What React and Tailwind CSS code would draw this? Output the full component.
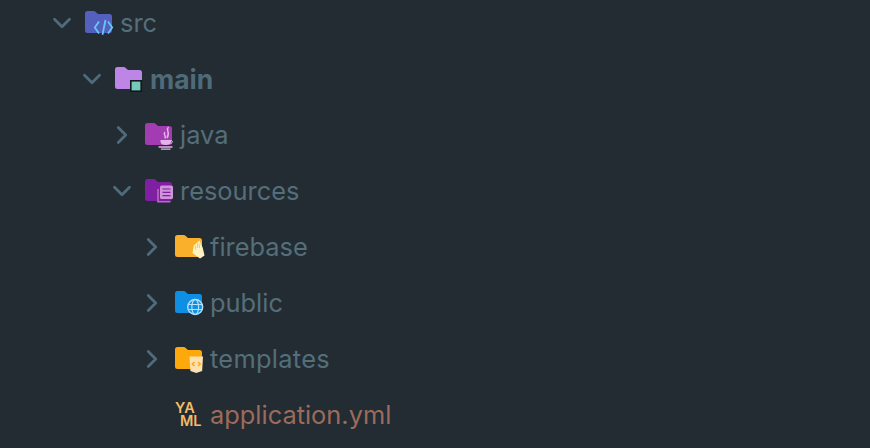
import { ChevronDown, ChevronRight } from 'lucide-react';

const Folder = ({ color }) => (
  <path d="M0 2.500A2.500 2.500 0 0 1 2.500 0h6.200c.8 0 1.500.3 2 .9L13 3h11.500A2.500 2.500 0 0 1 27 5.500V19.500A2.500 2.500 0 0 1 24.500 22H2.500A2.500 2.500 0 0 1 0 19.500Z" fill={color} />
);

const SrcIcon = () => (
  <svg width="30" height="28" viewBox="0 0 30 28" fill="none">
    <Folder color="#5460BE" />
    <path d="M14 10.500 9.800 16.500 14 22.500M23 10.500 27.200 16.500 23 22.500M20.500 9 17.500 23.800" stroke="#64C8F4" strokeWidth="1.800" />
  </svg>
);

const MainIcon = () => (
  <svg width="30" height="28" viewBox="0 0 30 28" fill="none">
    <Folder color="#BD85E6" />
    <rect x="15.800" y="13.800" width="10.400" height="10.400" fill="#76C8B8" stroke="#10181C" strokeWidth="1.600" />
  </svg>
);

const JavaIcon = () => (
  <svg width="30" height="28" viewBox="0 0 30 28" fill="none">
    <Folder color="#A33CB2" />
    <path d="M23.500 4c-3.500 3.500 2.500 4.500-1.500 11M20 9c-2.500 2.500 1.500 3.500 0 6.500" stroke="#E2B3E8" strokeWidth="1.500" />
    <path d="M15.500 17h10.500v1.500c0 2.500-2 3.500-5.250 3.500s-5.250-1-5.250-3.500Z" fill="#E2B3E8" />
    <path d="M26 17.500c2 0 2 2.500-.5 3" stroke="#E2B3E8" strokeWidth="1" />
    <path d="M14 24h13M16.500 26.200h8.500" stroke="#E2B3E8" strokeWidth="1.300" strokeLinecap="round" />
  </svg>
);

const ResourcesIcon = () => (
  <svg width="30" height="28" viewBox="0 0 30 28" fill="none">
    <Folder color="#7F1FA1" />
    <path d="M13 10v12.800h12.500" stroke="#BA68C8" strokeWidth="1.600" />
    <rect x="15" y="6.500" width="13" height="13.500" rx="1.500" fill="#CE93D8" />
    <path d="M17.500 10h8M17.500 13.300h8M17.500 16.600h8" stroke="#7F1FA1" strokeWidth="1.200" />
  </svg>
);

const FirebaseIcon = () => (
  <svg width="30" height="28" viewBox="0 0 30 28" fill="none">
    <Folder color="#FBB02C" />
    <path d="M17.500 18 18.800 10.500 24.500 5.500 27.800 13 29.500 20.500 25 23.500Z" fill="#FFF3C4" />
    <path d="M20.300 10.500 20.800 14.500M22.800 8 22.300 13M25 8.500 24.200 13" stroke="#FBB02C" strokeWidth="0.700" />
  </svg>
);

const PublicIcon = () => (
  <svg width="30" height="28" viewBox="0 0 30 28" fill="none">
    <Folder color="#0F8FE4" />
    <circle cx="20.200" cy="16" r="7.500" fill="#0F8FE4" stroke="#B5DFFA" strokeWidth="1.400" />
    <ellipse cx="20.200" cy="16" rx="3.400" ry="7.500" stroke="#B5DFFA" strokeWidth="1.200" />
    <path d="M13 13.500h14.400M13 18.500h14.400" stroke="#B5DFFA" strokeWidth="1.200" />
  </svg>
);

const TemplatesIcon = () => (
  <svg width="30" height="28" viewBox="0 0 30 28" fill="none">
    <Folder color="#FDA90B" />
    <path d="M14.500 9.500h13.500l-.9 14.500-5.850 2-5.850-2Z" fill="#FFE0B2" />
    <path d="M19.500 15 17.300 17 19.500 19M23 15 25.200 17 23 19" stroke="#FDA90B" strokeWidth="1.500" />
  </svg>
);

// one wrapped text: the negative indent keeps YA left of ML
const YamlIcon = () => (
  <div className="w-[30px] -translate-y-[3px] pl-[5px] -indent-[5px] text-[14.500px] font-semibold leading-[13px] text-[#F4BC68]">
    YA ML
  </div>
);

const rows = [
  { name: 'src', depth: 0, open: true, icon: <SrcIcon /> },
  { name: 'main', depth: 1, open: true, icon: <MainIcon />, bold: true },
  { name: 'java', depth: 2, open: false, icon: <JavaIcon /> },
  { name: 'resources', depth: 2, open: true, icon: <ResourcesIcon /> },
  { name: 'firebase', depth: 3, open: false, icon: <FirebaseIcon /> },
  { name: 'public', depth: 3, open: false, icon: <PublicIcon /> },
  { name: 'templates', depth: 3, open: false, icon: <TemplatesIcon />, wide: true },
  { name: 'application.yml', depth: 3, icon: <YamlIcon />, file: true },
];

const Row = ({ row }) => {
  const Chevron = row.open ? ChevronDown : ChevronRight;
  return (
    <div className="flex h-14 items-center" style={{ paddingLeft: 48 + row.depth * 30 }}>
      <div className="flex w-[28px] justify-center text-[#4E6C7B]">
        {!row.file && <Chevron size={30} strokeWidth={2.200} className="shrink-0" />}
      </div>
      <div className="ml-[9px] flex w-[35px] translate-y-[2px]">{row.icon}</div>
      <span
        className={`leading-none ${row.wide ? 'tracking-[0.3px]' : ''} ${row.bold ? 'text-[26.500px] font-bold' : 'text-[25.400px] font-normal'} ${
          row.file ? 'text-[#9C6B5C]' : row.bold ? 'text-[#4F6B79]' : 'text-[#546E7A]'
        }`}
      >
        {row.name}
      </span>
    </div>
  );
};

export default function App() {
  return (
    <div className="h-[448px] w-[870px] overflow-hidden bg-[#232C32] font-['Inter',sans-serif]">
      <div className="-mt-[5px]">
        {rows.map((row) => (
          <Row key={row.name} row={row} />
        ))}
      </div>
    </div>
  );
}
